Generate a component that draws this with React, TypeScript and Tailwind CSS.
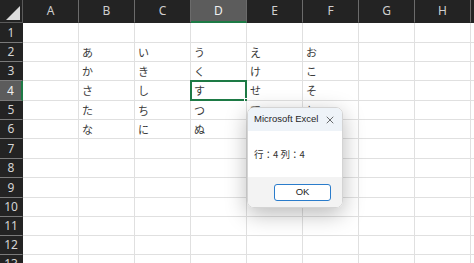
import { X } from "lucide-react";

const cols = ["A", "B", "C", "D", "E", "F", "G", "H", "I"];
const rowHeights = [20, 19, 19, 20, 19, 19, 20, 19, 20, 19, 19, 19, 19];

// cell contents: row index (1-based) -> column letter -> text
const data: Record<number, Record<string, string>> = {
	2: { B: "あ", C: "い", D: "う", E: "え", F: "お" },
	3: { B: "か", C: "き", D: "く", E: "け", F: "こ" },
	4: { B: "さ", C: "し", D: "す", E: "せ", F: "そ" },
	5: { B: "た", C: "ち", D: "つ", E: "て", F: "と" },
	6: { B: "な", C: "に", D: "ぬ", E: "ね", F: "の" },
};

const uiFont = { fontFamily: '"Noto Sans", "Noto Sans CJK JP", sans-serif' };
const dlgFont = { fontFamily: '"Liberation Sans", "Noto Sans CJK JP", sans-serif' };
const jpFont = { fontFamily: '"Noto Sans CJK JP", "Noto Sans", sans-serif' };

function CornerCell() {
	return (
		<div className="relative bg-[#232323] border-r border-b border-[#5a5a5a]">
			<svg className="absolute right-[2px] bottom-[2px]" width="14" height="14" viewBox="0 0 14 14">
				<polygon points="14,0 14,14 0,14" fill="#dcdcdc" />
			</svg>
		</div>
	);
}

function ColHeader({ label }: { label: string }) {
	const selected = label === "D";
	return (
		<div
			className={`flex items-center justify-center text-[12px] border-r border-[#6b6b6b] ${
				selected
					? "bg-[#5c5c5c] text-[#f0f0f0] border-b-2 border-b-[#1d7a45]"
					: "bg-[#232323] text-[#cfcfcf] border-b border-b-[#232323]"
			}`}
			style={uiFont}>
			{label}
		</div>
	);
}

function RowHeader({ n }: { n: number }) {
	const selected = n === 4;
	return (
		<div
			className={`flex items-center justify-center text-[12px] border-b border-[#7a7a7a] ${
				selected
					? "bg-[#5c5c5c] text-[#f0f0f0] border-r-2 border-r-[#1d7a45]"
					: "bg-[#232323] text-[#d4d4d4] border-r border-r-[#232323]"
			}`}
			style={uiFont}>
			{n}
		</div>
	);
}

function Cell({ row, col }: { row: number; col: string }) {
	const text = data[row]?.[col] ?? "";
	const active = row === 4 && col === "D";
	return (
		<div className="relative flex items-center pl-[3px] bg-white border-r border-b border-[#e0e0e0] text-[11px] text-[#3a3a3a]" style={jpFont}>
			{text}
			{active && (
				<>
					<div className="absolute -left-[1px] -top-[1px] -right-[1px] -bottom-[1px] border-2 border-[#1d7a45]" />
					<div className="absolute -right-[3px] -bottom-[3px] w-[5px] h-[5px] bg-[#1d7a45] border border-white" />
				</>
			)}
		</div>
	);
}

function MessageBox() {
	return (
		<div
			className="absolute left-[247px] top-[107px] w-[96px] h-[101px] flex flex-col rounded-[7px] border border-[#d4d4d4] overflow-hidden shadow-[0_6px_22px_rgba(0,0,0,0.28)]"
			style={dlgFont}>
			<div className="h-[23px] flex items-center justify-between pl-[6px] pr-[6px] bg-[#eef3f8]">
				<span className="whitespace-nowrap text-[9.5px] text-[#1f1f1f]">Microsoft Excel</span>
				<X size={12} strokeWidth={1.3} className="shrink-0 text-[#222]" />
			</div>
			<div className="h-[46px] flex items-center pl-[6px] bg-white text-[9.5px] text-[#333] whitespace-nowrap" style={jpFont}>
				行：4 列：4
			</div>
			<div className="flex-1 flex items-center justify-end pr-[11px] bg-[#f3f3f3]">
				<button className="w-[57px] h-[17px] rounded-[3px] border border-[#2a7ccb] bg-white text-[9.5px] text-[#222]">
					OK
				</button>
			</div>
		</div>
	);
}

export default function App() {
	const gridRows = `23px ${rowHeights.map((h) => `${h}px`).join(" ")}`;
	return (
		<div className="relative w-[474px] h-[263px] overflow-hidden bg-white">
			<div
				className="grid grid-cols-[23px_repeat(9,56px)]"
				style={{ gridTemplateRows: gridRows }}>
				<CornerCell />
				{cols.map((c) => (
					<ColHeader key={c} label={c} />
				))}
				{rowHeights.map((_, i) => {
					const n = i + 1;
					return [
						<RowHeader key={`h${n}`} n={n} />,
						...cols.map((c) => <Cell key={`${c}${n}`} row={n} col={c} />),
					];
				})}
			</div>
			<MessageBox />
		</div>
	);
}
